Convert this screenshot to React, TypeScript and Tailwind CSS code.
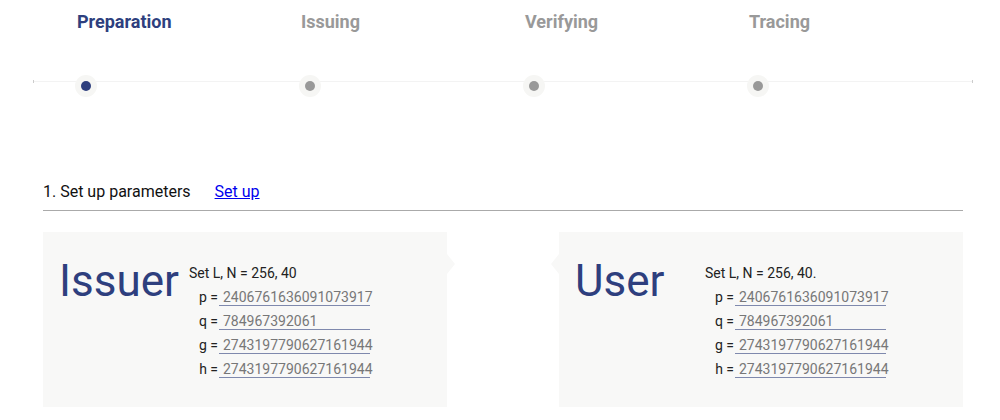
import React from "react";

const steps = ["Preparation", "Issuing", "Verifying", "Tracing"];

const params = [
  { name: "p", value: "2406761636091073917" },
  { name: "q", value: "784967392061" },
  { name: "g", value: "2743197790627161944" },
  { name: "h", value: "2743197790627161944" },
];

function ParamCard({ title, setLine, side }: { title: string; setLine: string; side: "left" | "right" }) {
  return (
    <div className="relative flex h-[175px] bg-[#f8f8f7] pl-[16px] pt-[28px]">
      {/* pointer */}
      {side === "left" ? (
        <span className="absolute right-[-8px] top-[22px] h-0 w-0 border-y-[10px] border-l-[8px] border-y-transparent border-l-[#f8f8f7]" />
      ) : (
        <span className="absolute left-[-8px] top-[22px] h-0 w-0 border-y-[10px] border-r-[8px] border-y-transparent border-r-[#f8f8f7]" />
      )}

      <div className="w-[130px] -mt-[1px] text-[44px] leading-[45px] text-[#2e3f7e]">{title}</div>

      <div className="text-[14px] text-[#222]">
        <div className="h-[24px] pt-[5px] leading-[16px]">{setLine}</div>
        {params.map((p) => (
          <div key={p.name} className="flex h-[24px] items-start">
            <span className="w-[30px] pr-[1px] pt-[5px] text-right leading-[16px]">{p.name} =</span>
            <span className="w-[151px] border-b border-[#7f89ad] pl-[4px] pt-[5px] leading-[16px] text-[#777]">
              {p.value}
            </span>
          </div>
        ))}
      </div>
    </div>
  );
}

export default function App() {
  return (
    <div className="h-[420px] w-[1000px] overflow-hidden bg-white font-['Roboto','Liberation_Sans',sans-serif]">
      {/* Stepper */}
      <div className="pt-[10px]">
        <div className="flex pl-[77px]">
          {steps.map((s, i) => (
            <div
              key={s}
              className={`w-[224px] text-[18px] font-bold leading-6 ${i === 0 ? "text-[#2e3f7e]" : "text-[#999]"}`}
            >
              {s}
            </div>
          ))}
        </div>

        <div className="relative mt-[41px] h-[22px]">
          <div className="absolute left-[33px] right-[28px] top-[6px] h-px bg-[#f3f3f3]" />
          <span className="absolute left-[33px] top-[5px] h-[3px] w-px bg-[#ccc]" />
          <span className="absolute right-[27px] top-[5px] h-[3px] w-px bg-[#ccc]" />
          <div className="relative flex pl-[75px]">
            {steps.map((s, i) => (
              <div key={s} className="w-[224px]">
                <div className="flex h-[22px] w-[22px] items-center justify-center rounded-full bg-[#f6f6f4]">
                  <span className={`h-[10px] w-[10px] rounded-full ${i === 0 ? "bg-[#2e3f7e]" : "bg-[#999]"}`} />
                </div>
              </div>
            ))}
          </div>
        </div>
      </div>

      {/* Section */}
      <div className="ml-[43px] mt-[85px] w-[920px]">
        <div className="flex items-center border-b border-[#aaa] pb-[8px] text-[16px] leading-5 text-[#111]">
          <span>1. Set up parameters</span>
          <a href="#" className="ml-[24px] text-[#0000ee] underline">
            Set up
          </a>
        </div>

        <div className="mt-[21px] grid grid-cols-2 gap-[112px]">
          <ParamCard title="Issuer" setLine="Set L, N = 256, 40" side="left" />
          <ParamCard title="User" setLine="Set L, N = 256, 40." side="right" />
        </div>
      </div>
    </div>
  );
}
